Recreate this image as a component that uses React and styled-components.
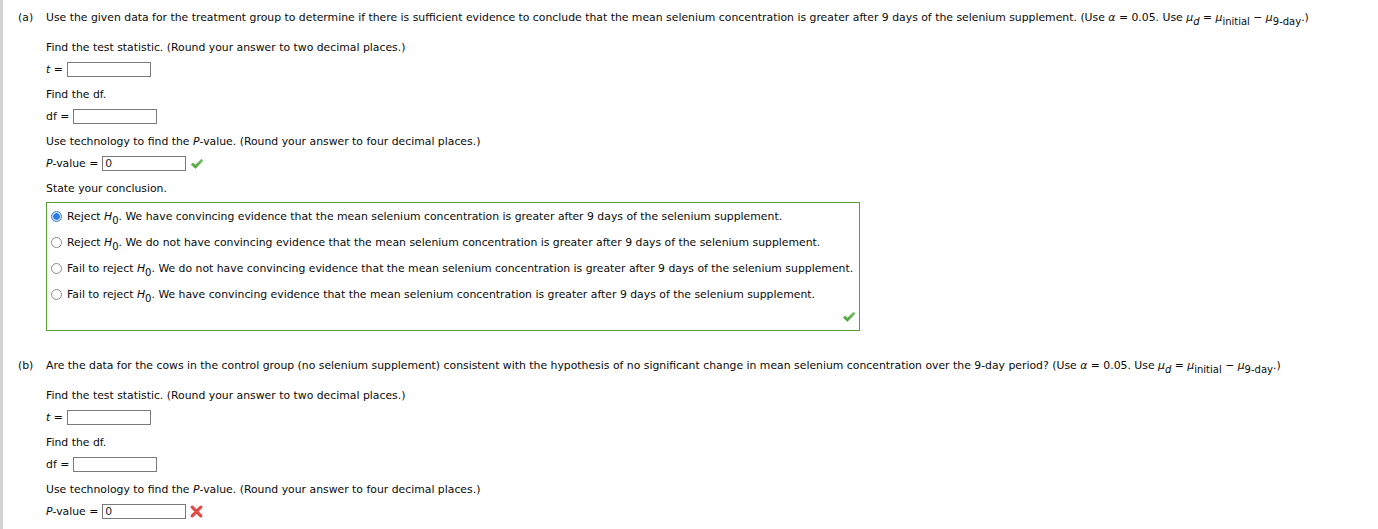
import React from 'react';
import styled, { createGlobalStyle } from 'styled-components';

const Global = createGlobalStyle`
  html, body {
    margin: 0;
    padding: 0;
    background: #fff;
  }
  body {
    font-family: 'DejaVu Sans', Verdana, sans-serif;
    font-size: 10.85px;
    color: #0a0a0a;
  }
`;

const Page = styled.div`
  border-left: 3px solid #d4d4d4;
  min-height: 529px;
  box-sizing: border-box;
  padding: 10px 0 0 15px;
`;

const Part = styled.section`
  display: flex;
  margin-bottom: ${(p) => p.$gap || 0}px;
`;

const Label = styled.div`
  width: 28px;
  flex: none;
  line-height: 16px;
`;

const Body = styled.div`
  flex: 1;
`;

const Question = styled.div`
  line-height: 16px;
  white-space: nowrap;
  margin-bottom: 14px;
`;

const Block = styled.div`
  margin-bottom: 9px;
`;

const Prompt = styled.div`
  line-height: 16px;
  white-space: nowrap;
`;

const InputRow = styled.div`
  display: flex;
  align-items: center;
  height: 17px;
  margin-top: 5px;
  gap: 4px;
`;

const Field = styled.span`
  display: inline-block;
  box-sizing: border-box;
  width: 84px;
  height: 15px;
  border: 1px solid #7a7a7a;
  padding-left: 2px;
  line-height: 13px;
  color: #222;
`;

const Em = styled.i`
  font-style: italic;
`;

const Sub = styled.sub`
  font-size: 10px;
  vertical-align: -4px;
  line-height: 0;
  font-style: ${(p) => (p.$italic ? 'italic' : 'normal')};
`;

const ChoiceBox = styled.div`
  border: 1px solid #5a9e32;
  width: 814px;
  box-sizing: border-box;
  margin-top: 5px;
  padding: 0 0 3px 4px;
`;

const Choice = styled.label`
  display: flex;
  align-items: center;
  height: 26px;
  gap: 5px;
  white-space: nowrap;
`;

const Radio = styled.span`
  width: 11px;
  height: 11px;
  border-radius: 50%;
  box-sizing: border-box;
  flex: none;
  border: 1px solid ${(p) => (p.$checked ? '#3b7fd8' : '#8c8c8c')};
  background: ${(p) =>
    p.$checked ? 'radial-gradient(circle, #2a7ae8 0 3px, #cfe2fb 3.5px)' : '#fff'};
`;

const MarkRow = styled.div`
  display: flex;
  justify-content: flex-end;
  padding-right: 3px;
  height: 20px;
  align-items: center;
`;

const Check = () => (
  <svg width="14" height="12" viewBox="0 0 14 12">
    <defs>
      <linearGradient id="cg" x1="0" y1="0" x2="0" y2="1">
        <stop offset="0" stopColor="#7cc86a" />
        <stop offset="1" stopColor="#4a9a3a" />
      </linearGradient>
    </defs>
    <path d="M0.8 6.6 L3.2 4.4 L5.4 6.8 L11.4 0.8 L13.4 2.8 L5.4 10.8 Z" fill="url(#cg)" />
  </svg>
);

const Cross = () => (
  <svg width="13" height="13" viewBox="0 0 13 13">
    <path d="M2.2 2.2 L10.8 10.8 M10.8 2.2 L2.2 10.8" stroke="#e24a45" strokeWidth="3.2" strokeLinecap="round" />
  </svg>
);

const Mu = ({ sub, italic }) => (
  <>
    <Em>μ</Em>
    <Sub $italic={italic}>{sub}</Sub>
  </>
);

const Use = () => (
  <>
    {' '}(Use <Em>α</Em> = 0.05. Use <Mu sub="d" italic /> = <Mu sub="initial" /> − <Mu sub="9-day" />.)
  </>
);

const H0 = () => (
  <>
    <Em>H</Em>
    <Sub>0</Sub>
  </>
);

const Inputs = ({ mark }) => (
  <>
    <Block>
      <Prompt>Find the test statistic. (Round your answer to two decimal places.)</Prompt>
      <InputRow>
        <span><Em>t</Em> =</span>
        <Field />
      </InputRow>
    </Block>
    <Block>
      <Prompt>Find the df.</Prompt>
      <InputRow>
        <span>df =</span>
        <Field />
      </InputRow>
    </Block>
    <Block>
      <Prompt>
        Use technology to find the <Em>P</Em>-value. (Round your answer to four decimal places.)
      </Prompt>
      <InputRow>
        <span><Em>P</Em>-value =</span>
        <Field>0</Field>
        {mark}
      </InputRow>
    </Block>
  </>
);

const choices = [
  ['Reject', 'We have convincing evidence that the mean selenium concentration is greater after 9 days of the selenium supplement.'],
  ['Reject', 'We do not have convincing evidence that the mean selenium concentration is greater after 9 days of the selenium supplement.'],
  ['Fail to reject', 'We do not have convincing evidence that the mean selenium concentration is greater after 9 days of the selenium supplement.'],
  ['Fail to reject', 'We have convincing evidence that the mean selenium concentration is greater after 9 days of the selenium supplement.'],
];

export default function App() {
  return (
    <>
      <Global />
      <Page>
        <Part $gap={27}>
          <Label>(a)</Label>
          <Body>
            <Question>
              Use the given data for the treatment group to determine if there is sufficient evidence to conclude that the mean selenium concentration is greater after 9 days of the selenium supplement.
              <Use />
            </Question>
            <Inputs mark={<Check />} />
            <Prompt>State your conclusion.</Prompt>
            <ChoiceBox>
              {choices.map(([verb, text], i) => (
                <Choice key={i}>
                  <Radio $checked={i === 0} />
                  <span>
                    {verb} <H0 />. {text}
                  </span>
                </Choice>
              ))}
              <MarkRow>
                <Check />
              </MarkRow>
            </ChoiceBox>
          </Body>
        </Part>
        <Part>
          <Label>(b)</Label>
          <Body>
            <Question>
              Are the data for the cows in the control group (no selenium supplement) consistent with the hypothesis of no significant change in mean selenium concentration over the 9-day period?
              <Use />
            </Question>
            <Inputs mark={<Cross />} />
          </Body>
        </Part>
      </Page>
    </>
  );
}
